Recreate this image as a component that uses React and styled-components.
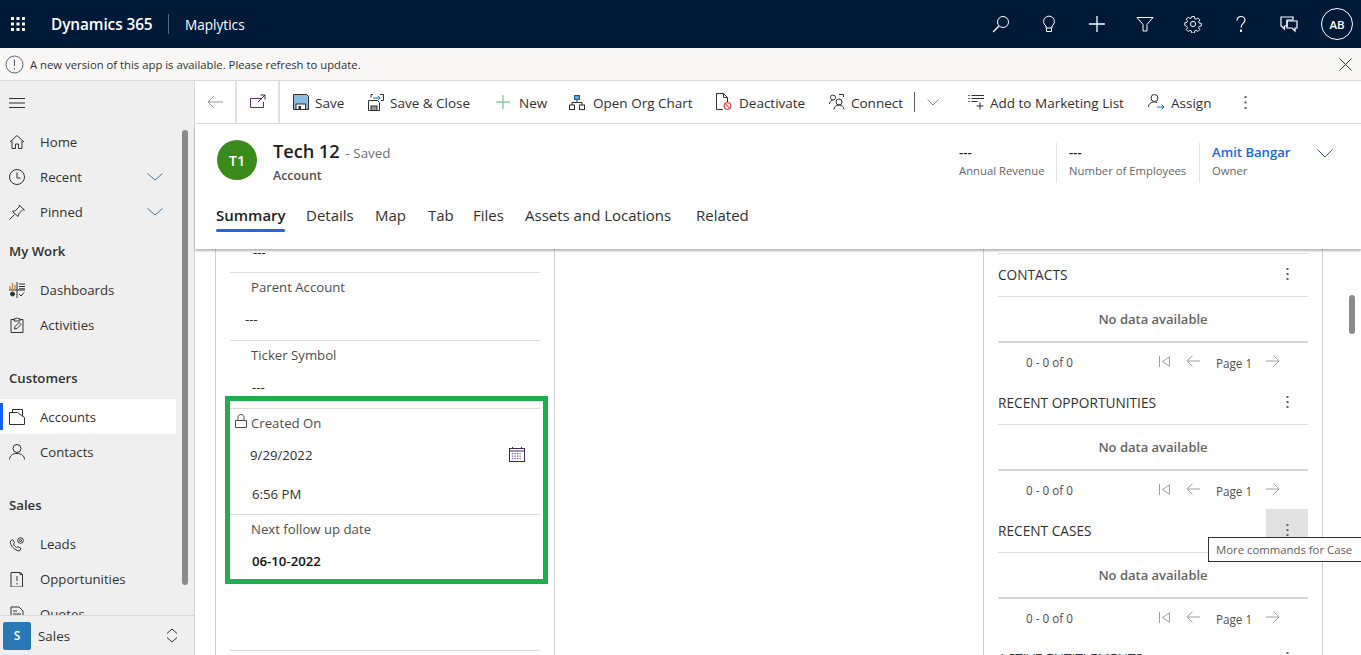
import React from "react";
import styled, { createGlobalStyle } from "styled-components";

const Global = createGlobalStyle`
  html, body { margin: 0; padding: 0; height: 100%; overflow: hidden; background: #fff; }
  body { font-family: "Open Sans", "Noto Sans", "Liberation Sans", sans-serif; color: #323130; }
  * { box-sizing: border-box; }
`;

const Page = styled.div`
  width: 1361px; height: 655px; display: flex; flex-direction: column; overflow: hidden; position: relative;
`;

/* Top bar */
const TopBar = styled.header`
  height: 48px; flex: none; background: #001a38; color: #fff; display: flex; align-items: center;
`;
const Waffle = styled.div`width: 36px; margin-right: 15px; display: flex; justify-content: center; align-items: center;`;
const Brand = styled.div`font-size: 15.4px; font-weight: 600; letter-spacing: -0.1px; width: 101px; white-space: nowrap;`;
const BrandSep = styled.div`width: 1px; height: 20px; background: #5d6b7e; margin: 0 16px 0 16px;`;
const AppName = styled.div`font-size: 13.6px; font-weight: 500; white-space: nowrap;`;
const TopIcons = styled.div`margin-left: auto; display: flex; align-items: center; padding-right: 0;`;
const TopBtn = styled.div`width: 48px; height: 48px; display: flex; align-items: center; justify-content: center;`;
const Avatar = styled.div`
  width: 32px; height: 32px; border: 1px solid #fff; border-radius: 50%; display: flex; align-items: center; justify-content: center;
  font-size: 11.5px; font-weight: 600; color: #fff;
`;

/* Notice */
const Notice = styled.div`
  height: 33px; flex: none; background: #f8f7f5; border-bottom: 1px solid #d9d9d9; display: flex; align-items: center;
  padding: 0 9px 0 5px; font-size: 11.3px; color: #323130;
`;
const NoticeText = styled.span`margin-left: 6px; white-space: nowrap;`;
const NoticeClose = styled.div`margin-left: auto; display: flex;`;

/* Main */
const Main = styled.div`flex: 1; display: flex; min-height: 0;`;
const Sidebar = styled.aside`
  width: 195px; flex: none; background: #efefef; border-right: 1px solid #d9d9d9; display: flex; flex-direction: column; position: relative;
`;
const Burger = styled.div`height: 43px; flex: none; padding: 0 0 0 9px; display: flex; align-items: center;`;
const Nav = styled.nav`flex: 1; min-height: 0; overflow: hidden;`;
const NavItem = styled.div`
  height: 35px; width: 176px; display: flex; align-items: center; position: relative; font-size: 13.2px; color: #323130;
  background: ${p => (p.$active ? "#fff" : "transparent")};
  ${p => p.$active && `&::before { content: ""; position: absolute; left: 0; top: 4px; bottom: 4px; width: 3px; background: #0f62fe; }`}
`;
const NavIcon = styled.span`width: 40px; flex: none; display: flex; justify-content: center; padding-right: 6px;`;
const NavLabel = styled.span`flex: 1; white-space: nowrap;`;
const NavChevron = styled.span`display: flex; margin-right: 13px;`;
const NavHead = styled.div`
  height: ${p => p.$h || 42}px; display: flex; align-items: center; padding-left: 9px; font-size: 13.2px; font-weight: 600; color: #323130;
  margin-top: ${p => p.$gap || 0}px;
`;
const SideFooter = styled.div`
  height: 40px; flex: none; border-top: 1px solid #d9d9d9; display: flex; align-items: center; padding-left: 3px; font-size: 13.4px; font-weight: 500;
  background: #efefef;
`;
const AreaBadge = styled.div`
  width: 28px; height: 28px; background: #2a77b6; color: #fff; border-radius: 2px; font-size: 12px; font-weight: 600;
  display: flex; align-items: center; justify-content: center; margin-right: 7px;
`;
const AreaSwitch = styled.span`margin-left: auto; margin-right: 16px; display: flex;`;
const SideScroll = styled.div`
  position: absolute; left: 182px; top: 49px; width: 6px; height: 455px; background: #8a8a8a; border-radius: 3px;
`;

/* Content */
const Content = styled.div`flex: 1; min-width: 0; display: flex; flex-direction: column;`;
const CommandBar = styled.div`
  height: 43px; flex: none; display: flex; align-items: center; border-bottom: 1px solid #d9d9d9; font-size: 13.5px; color: #323130;
`;
const CmdSquare = styled.div`
  height: 42px; display: flex; align-items: center; justify-content: center; border-right: 2px solid #e1e1e1; width: ${p => p.$w}px; flex: none;
`;
const Cmd = styled.div`
  display: flex; align-items: center; flex: none; width: ${p => p.$w}px; height: 42px; padding-top: 1px; padding-left: ${p => p.$pl || 0}px; white-space: nowrap;
`;
const CmdIcon = styled.span`width: ${p => p.$w || 23}px; flex: none; display: flex; justify-content: flex-start; margin-top: -1px;`;
const CmdSep = styled.div`width: 1px; height: 20px; background: #605e5c; flex: none;`;

const Header = styled.div`
  height: 125px; flex: none; background: #fff; position: relative; z-index: 2; box-shadow: 0 2px 2px rgba(0,0,0,.28);
  display: flex; flex-direction: column; padding: 0 0 0 21px;
`;
const HeaderTop = styled.div`display: flex; align-items: flex-start; height: 71px; padding-top: 16px;`;
const Circle = styled.div`
  width: 40px; height: 40px; border-radius: 50%; background: #3a8a1c; color: #fff; font-size: 14.5px; font-weight: 600;
  display: flex; align-items: center; justify-content: center; margin-right: 16px; margin-left: 1px;
`;
const TitleBlock = styled.div`display: flex; flex-direction: column;`;
const TitleRow = styled.div`display: flex; align-items: baseline; height: 27px; margin-top: -2px;`;
const Title = styled.div`font-size: 18.3px; font-weight: 600; color: #201f1e; white-space: nowrap; letter-spacing: -0.1px;`;
const Saved = styled.span`font-size: 13.4px; color: #707070; margin-left: 6px; white-space: nowrap;`;
const Entity = styled.div`font-size: 12.4px; font-weight: 600; color: #505050; margin-top: 2px;`;
const Stats = styled.div`margin-left: auto; display: flex; align-items: flex-start; padding-top: 3px;`;
const Stat = styled.div`
  width: ${p => p.$w}px; height: 40px; display: flex; flex-direction: column; padding-left: ${p => p.$pl}px;
  border-left: ${p => (p.$sep ? "1px solid #e1e1e1" : "none")};
`;
const StatValue = styled.div`font-size: 13.1px; font-weight: 600; color: ${p => p.$link ? "#2266e3" : "#201f1e"}; height: 20px; line-height: 18px; white-space: nowrap;`;
const StatLabel = styled.div`font-size: 11.3px; color: #666; line-height: 16px; white-space: nowrap;`;
const OwnerChevron = styled.div`width: 44px; padding-top: 6px; flex:none; display: flex; align-items: flex-start;`;
const Tabs = styled.div`display: flex; align-items: flex-start; height: 36px; font-size: 15px; color: #323130; margin-left: 0;`;
const Tab = styled.div`
  width: ${p => p.$w}px; flex: none; position: relative; height: 35px; line-height: 36px; margin-right: ${p => p.$mr}px; white-space: nowrap; margin-top: 2px;
  font-weight: ${p => (p.$active ? 600 : 400)}; color: ${p => (p.$active ? "#201f1e" : "#323130")};
  ${p => p.$active && `&::after { content: ""; position: absolute; left: 0; right: 0; bottom: 0; height: 3px; border-radius: 2px; background: #2266e3; }`}
`;

const Body = styled.div`flex: 1; min-height: 0; position: relative; background: #fff; overflow: hidden; display: flex; padding-left: 20px;`;
const Section = styled.section`
  width: ${p => p.$w || 340}px; flex: none; height: 100%; border-left: 1px solid #cfcfcf; border-right: 1px solid #cfcfcf; overflow: hidden;
  margin-right: ${p => p.$mr || 0}px;
`;
const FormInner = styled.div`padding: 0 14px;`;
const TopValue = styled.div`height: 23px; padding-left: 23px; font-size: 13.2px; line-height: 6px; color: #201f1e; overflow: hidden;`;
const Field = styled.div`height: ${p => p.$h}px; border-top: 1px solid #dcdcdc; display: flex; flex-direction: column;`;
const FieldLabel = styled.div`
  height: 28px; display: flex; align-items: center; padding-left: ${p => p.$lock ? 5 : 21}px; font-size: 13.2px; color: #4f4e4d; white-space: nowrap;
`;
const LockWrap = styled.span`display: flex; width: 16px; margin-top: -4px;`;
const FieldValue = styled.div`
  height: ${p => p.$h || 36}px; display: flex; align-items: center; justify-content: space-between; padding: 0 15px 0 ${p => p.$pl}px;
  font-size: 13.2px; font-weight: ${p => (p.$bold ? 600 : 400)}; color: ${p => (p.$bold ? "#111" : "#323130")}; white-space: nowrap;
`;
const Highlight = styled.div`
  position: absolute; left: 30px; top: 147px; width: 323px; height: 188px; border: 5px solid #22ae4e; pointer-events: none;
`;

const Panels = styled.div`padding: 4px 14px 0; width: 100%;`;
const TopLine = styled.div`height: 1px; background: #dcdcdc;`;
const Panel = styled.div`height: 128px; display: flex; flex-direction: column;`;
const PanelHead = styled.div`
  height: 43px; flex: none; border-bottom: 1px solid #dcdcdc; display: flex; align-items: center; justify-content: space-between;
  font-size: 13.7px; color: #323130; font-weight: 500; white-space: nowrap;
`;
const PanelTitle = styled.span`margin-top: -2px;`;
const MoreBtn = styled.div`
  width: 42px; height: 42px; display: flex; align-items: center; justify-content: center; background: ${p => p.$on ? "#e1e1e1" : "transparent"};
  margin-top: -2px;
`;
const NoData = styled.div`
  height: 46px; flex: none; border-bottom: 2px solid #d6d6d6; display: flex; align-items: center; justify-content: center;
  font-size: 13px; font-weight: 600; color: #666;
`;
const Pager = styled.div`height: 39px; flex: none; display: flex; align-items: center; font-size: 11.7px; color: #4f4e4d; padding-left: 28px;`;
const PagerCount = styled.span`width: 133px; flex: none; white-space: nowrap; margin-top: -1px;`;
const PagerIcon = styled.span`display: flex; width: ${p => p.$w}px; flex: none; margin-top: -3px;`;
const PagerPage = styled.span`width: 50px; flex: none; white-space: nowrap;`;

const Tooltip = styled.div`
  position: absolute; left: 1013px; top: 288px; width: 154px; height: 25px; background: #fff; border: 1px solid #333; color: #605e5c;
  font-size: 11.35px; display: flex; align-items: center; padding-left: 7px; white-space: nowrap; z-index: 3;
`;
const MainScroll = styled.div`position: absolute; left: 1154px; top: 46px; width: 6px; height: 39px; background: #8a8a8a; border-radius: 3px;`;

/* Icons */
const Svg = ({ s = 16, w, h, c = "#323130", sw = 1, vb, children }) => (
  <svg width={w || s} height={h || s} viewBox={vb || `0 0 ${w || s} ${h || s}`} fill="none" stroke={c} strokeWidth={sw} style={{ display: "block" }}>{children}</svg>
);

const WaffleIcon = () => (
  <svg width="16" height="16" viewBox="0 0 16 16" fill="#fff" style={{ display: "block" }}>
    {[1, 6.5, 12].flatMap(y => [1, 6.5, 12].map(x => <rect key={`${x}-${y}`} x={x} y={y} width="3" height="3" />))}
  </svg>
);
const Search = () => <Svg s={18} c="#fff"><circle cx="11" cy="7" r="5.5" /><path d="M7 11l-6 6" strokeWidth="1.4" /></Svg>;
const Bulb = () => <Svg s={18} c="#fff"><path d="M6 13v-2C4.5 9.8 3.6 8.400 3.600 6.500a5.400 5.400 0 0 1 10.800 0c0 1.900-.9 3.300-2.400 4.500v2zM6.500 13v3.500h5V13" /></Svg>;
const Plus = ({ s = 18, c = "#fff", sw = 1.3 }) => <Svg s={s} c={c} sw={sw}><path d={`M${s / 2} 1V${s - 1}M1 ${s / 2}H${s - 1}`} /></Svg>;
const Funnel = () => <Svg s={18} c="#fff"><path d="M1 2.500h16L11 9.500v6.500H7V9.500z" /></Svg>;
const Gear = () => (
  <Svg s={18} c="#fff">
    <circle cx="9" cy="9" r="2.600" />
    <path d="M7.600 1h2.800l.4 2.300 1.400.6 2-1.300 2 2-1.300 2 .6 1.400 2.300.4v2.800l-2.300.4-.6 1.400 1.300 2-2 2-2-1.300-1.400.6-.4 2.300H7.600l-.4-2.300-1.400-.6-2 1.300-2-2 1.300-2-.6-1.400L.2 10.400V7.600l2.300-.4.6-1.400-1.300-2 2-2 2 1.300 1.400-.6z" transform="scale(.94) translate(.6 .6)" />
  </Svg>
);
const Help = () => <Svg s={18} c="#fff" sw={1.2}><path d="M5 5.500C5 3 7 1.500 9 1.500s4 1.400 4 3.600c0 3.500-4 3.200-4 7.400" /><circle cx="9" cy="15.800" r=".6" fill="#fff" /></Svg>;
const Chat = () => (
  <Svg s={18} c="#fff" sw={1.2}>
    <path d="M1 2h12v3H7v6H4.500v3L1.500 11H1z" />
    <path d="M7 6h10v7h-2v3l-3-3H7z" />
  </Svg>
);
const InfoCircle = () => (
  <Svg s={19} c="#55606b"><circle cx="9.500" cy="9.500" r="8.500" /><path d="M9.500 4.500v6.500M9.500 13v1.500" /></Svg>
);
const CloseX = () => <Svg s={13} c="#323130"><path d="M.5.500l12 12M12.500.500l-12 12" /></Svg>;
const Hamburger = () => <Svg w={16} h={10}><path d="M0 .500h16M0 5h16M0 9.500h16" /></Svg>;
const Chevron = ({ w = 16, h = 8, c = "#4d6f87" }) => <Svg w={w} h={h} c={c}><path d={`M.5 .5L${w / 2} ${h - 1}L${w - .5} .5`} /></Svg>;

const Home = () => <Svg><path d="M1 8l7-6.500L15 8M3 6.500V14.500h3.500V10h3v4.500H13V6.500" /></Svg>;
const Clock = () => <Svg><circle cx="8" cy="8" r="7.500" /><path d="M8 3.500V9h3.500" /></Svg>;
const Pin = () => <Svg><path d="M.5 15.500L5.500 10.500M3.500 7.500l3-1 4-4-.5-1.500 5.500 5-1.500-.5-4 4-1 3z" /></Svg>;
const Dash = () => (
  <Svg>
    <path d="M0 8h16M8 0v16" />
    <path d="M1 7V4M3.500 7V1M6 7V3" stroke="#c98a3c" strokeWidth="1.400" />
    <path d="M10 2h6M10 4.500h6M10 6.800h6M10 12l2 2 3-3.500" />
    <circle cx="3.500" cy="12" r="2" fill="#323130" />
  </Svg>
);
const Clipboard = () => (
  <Svg><path d="M5 2.500H2v13h12v-13h-3M5 4V1.800h2l1-1 1 1h2V4zM5.500 12l.5-2.500 4-4 2 2-4 4z" /></Svg>
);
const Account = () => <Svg><path d="M.5 3.500h8l7 5v7H.5zM3.500 3.500V.5h10v7" /></Svg>;
const Person = ({ s = 16, c = "#323130" }) => <Svg s={s} c={c}><circle cx="8" cy="4.500" r="4" /><path d="M.5 15.500c0-3.500 3-6 7.500-6s7.500 2.500 7.500 6" /></Svg>;
const Phone = () => (
  <Svg>
    <path d="M1.500 5c-1 4 4.500 10 9 10l1.500-2.500-3-2-1.500 1c-1.500-.8-2.500-2-3-3.500l1-1.500-2-3z" />
    <circle cx="11.500" cy="4.500" r="2.800" /><circle cx="11.500" cy="4.500" r="1" />
  </Svg>
);
const Opp = () => <Svg><path d="M2 1.500h9v2h2.500v12.500H2zM11 1.500l2.500 2M8 5v5M8 12v1.500" /></Svg>;
const Quote = () => <Svg><path d="M2 1h8l4 4v10H2zM4 5h4M4 8h8M4 11h8" /></Svg>;
const UpDown = () => <Svg w={12} h={15} c="#323130"><path d="M1 5.500L6 1l5 4.500M1 9.500L6 14l5-4.500" /></Svg>;

const Back = () => <Svg s={16} c="#9a9896"><path d="M16 8H1M7 2L1 8l6 6" /></Svg>;
const Popout = () => <Svg s={16}><path d="M11 4.500H.5v9h13V8" stroke="#5c2e6f" /><path d="M8 8L15 1M10.500 1H15v4.500" stroke="#323130" /></Svg>;
const Floppy = () => (
  <svg width="16" height="16" viewBox="0 0 16 16" style={{ display: "block" }}>
    <path d="M.5.500h13l2 2v13H.5z" fill="#8dbbe3" stroke="#323130" />
    <rect x="3" y="10" width="9.500" height="5.500" fill="#fff" stroke="#323130" />
    <rect x="5.500" y="12" width="2.500" height="3.500" fill="#323130" />
  </svg>
);
const SaveClose = () => (
  <svg width="16" height="17" viewBox="0 0 16 17" fill="none" style={{ display: "block" }}>
    <path d="M.5 6.500h9l2 2v8H.5z" stroke="#323130" />
    <rect x="3" y="12" width="6" height="4.500" stroke="#323130" fill="#9a9a9a" />
    <path d="M3 3.500V.5h2M12 .5h3.500v6H13" stroke="#323130" />
    <path d="M5 4h7M10 1.800l2 2.200-2 2.200" stroke="#106ebe" />
  </svg>
);
const OrgChart = () => (
  <svg width="16" height="15" viewBox="0 0 16 15" fill="none" style={{ display: "block" }}>
    <rect x="5.500" y=".5" width="5" height="4" fill="#5da5e0" stroke="#1d5d96" />
    <path d="M8 4.500v3M3 10V7.500h10V10" stroke="#323130" />
    <rect x=".5" y="10" width="5" height="4.500" stroke="#323130" />
    <rect x="10.500" y="10" width="5" height="4.500" stroke="#323130" />
  </svg>
);
const Deact = () => (
  <svg width="16" height="18" viewBox="0 0 16 18" fill="none" style={{ display: "block" }}>
    <path d="M7 16.500H.5V.5h7l4 4V9M7.500.5v4h4" stroke="#323130" />
    <circle cx="11.500" cy="13" r="3.300" stroke="#e0505a" strokeWidth="1.300" />
    <path d="M9.200 10.700l4.600 4.600" stroke="#e0505a" strokeWidth="1.200" />
  </svg>
);
const Connect = () => (
  <Svg s={16}>
    <circle cx="4" cy="3.500" r="2.500" />
    <path d="M.5 10c0-2 1-3.500 3-3.500M10 .5h4.500V3" />
    <circle cx="10" cy="8" r="3" />
    <path d="M5 15.500c0-2.500 2-4.500 5-4.500s5 2 5 4.500" />
  </Svg>
);
const AddList = () => (
  <svg width="17" height="16" viewBox="0 0 17 16" fill="none" style={{ display: "block" }}>
    <path d="M3.500 1.500H16M3.500 4.500H16M3.500 7.500h6" stroke="#323130" />
    <path d="M0 1.500h2M0 4.500h2M0 7.500h2" stroke="#323130" opacity=".7" />
    <path d="M12 8.500v7M8.500 12h7" stroke="#323130" />
  </svg>
);
const Assign = () => (
  <svg width="17" height="16" viewBox="0 0 17 16" fill="none" style={{ display: "block" }}>
    <circle cx="6.500" cy="4" r="3.500" stroke="#323130" />
    <path d="M.5 13c0-3 2.500-5 6-5 1 0 2 .2 2.800.6" stroke="#323130" />
    <path d="M9 13h7M13.500 10.500L16 13l-2.500 2.500" stroke="#106ebe" />
  </svg>
);
const Dots = ({ c = "#605e5c", h = 13 }) => (
  <svg width="3" height={h} viewBox={`0 0 3 ${h}`} fill={c} style={{ display: "block" }}>
    <rect x=".5" y="0" width="2" height="2" /><rect x=".5" y={(h - 2) / 2} width="2" height="2" /><rect x=".5" y={h - 2} width="2" height="2" />
  </svg>
);
const Lock = () => <Svg w={12} h={14} c="#4f4e4d"><path d="M.5 6.500h11v7H.5zM3 6.500V3.500C3 1.500 4.500.5 6 .5s3 1 3 3v3" /></Svg>;
const Calendar = () => (
  <svg width="16" height="15" viewBox="0 0 16 15" fill="none" style={{ display: "block" }}>
    <rect x=".5" y="1.500" width="15" height="13" stroke="#3f2a5c" />
    <path d="M.5 4h15" stroke="#3f2a5c" strokeWidth="1" />
    <path d="M3.500 0v2M12.500 0v2" stroke="#3f2a5c" />
    {[6, 8.500, 11].flatMap(y => [3, 5.500, 8, 10.500].map(x => <rect key={`${x}${y}`} x={x} y={y} width="1.200" height="1.200" fill="#7a4aa0" />))}
  </svg>
);
const PgFirst = () => <Svg w={11} h={11} c="#a19f9d"><path d="M.5 0v11M10.500 .8L3.500 5.500l7 4.700z" /></Svg>;
const PgPrev = () => <Svg w={14} h={12} c="#a19f9d"><path d="M14 6H1M6.500.5L1 6l5.500 5.500" /></Svg>;
const PgNext = () => <Svg w={14} h={12} c="#a19f9d"><path d="M0 6h13M7.500.5L13 6l-5.500 5.500" /></Svg>;

const navA = [
  { l: "Home", i: <Home /> },
  { l: "Recent", i: <Clock />, c: 1 },
  { l: "Pinned", i: <Pin />, c: 1 },
];

const NavEntry = ({ icon, label, chevron, active }) => (
  <NavItem $active={active}>
    <NavIcon>{icon}</NavIcon>
    <NavLabel>{label}</NavLabel>
    {chevron && <NavChevron><Chevron /></NavChevron>}
  </NavItem>
);

const panels = [
  { t: "CONTACTS" },
  { t: "RECENT OPPORTUNITIES" },
  { t: "RECENT CASES", on: true },
  { t: "ACTIVE ENTITLEMENTS" },
];

const DataPanel = ({ t, on }) => (
  <Panel>
    <PanelHead>
      <PanelTitle>{t}</PanelTitle>
      <MoreBtn $on={on}><Dots c="#605e5c" h={12} /></MoreBtn>
    </PanelHead>
    <NoData>No data available</NoData>
    <Pager>
      <PagerCount>0 - 0 of 0</PagerCount>
      <PagerIcon $w={27}><PgFirst /></PagerIcon>
      <PagerIcon $w={30}><PgPrev /></PagerIcon>
      <PagerPage>Page 1</PagerPage>
      <PagerIcon $w={14}><PgNext /></PagerIcon>
    </Pager>
  </Panel>
);

export default function App() {
  return (
    <Page>
      <Global />
      <TopBar>
        <Waffle><WaffleIcon /></Waffle>
        <Brand>Dynamics 365</Brand>
        <BrandSep />
        <AppName>Maplytics</AppName>
        <TopIcons>
          <TopBtn><Search /></TopBtn>
          <TopBtn><Bulb /></TopBtn>
          <TopBtn><Plus /></TopBtn>
          <TopBtn><Funnel /></TopBtn>
          <TopBtn><Gear /></TopBtn>
          <TopBtn><Help /></TopBtn>
          <TopBtn><Chat /></TopBtn>
          <TopBtn><Avatar>AB</Avatar></TopBtn>
        </TopIcons>
      </TopBar>
      <Notice>
        <InfoCircle />
        <NoticeText>A new version of this app is available. Please refresh to update.</NoticeText>
        <NoticeClose><CloseX /></NoticeClose>
      </Notice>
      <Main>
        <Sidebar>
          <Burger><Hamburger /></Burger>
          <Nav>
            {navA.map(n => <NavEntry key={n.l} icon={n.i} label={n.l} chevron={n.c} />)}
            <NavHead $h={43}>My Work</NavHead>
            <NavEntry icon={<Dash />} label="Dashboards" />
            <NavEntry icon={<Clipboard />} label="Activities" />
            <NavHead $gap={15}>Customers</NavHead>
            <NavEntry icon={<Account />} label="Accounts" active />
            <NavEntry icon={<Person />} label="Contacts" />
            <NavHead $gap={15}>Sales</NavHead>
            <NavEntry icon={<Phone />} label="Leads" />
            <NavEntry icon={<Opp />} label="Opportunities" />
            <NavEntry icon={<Quote />} label="Quotes" />
          </Nav>
          <SideFooter>
            <AreaBadge>S</AreaBadge>
            Sales
            <AreaSwitch><UpDown /></AreaSwitch>
          </SideFooter>
          <SideScroll />
        </Sidebar>
        <Content>
          <CommandBar>
            <CmdSquare $w={42}><Back /></CmdSquare>
            <CmdSquare $w={43}><Popout /></CmdSquare>
            <Cmd $w={75} $pl={13}><CmdIcon $w={22}><Floppy /></CmdIcon>Save</Cmd>
            <Cmd $w={127} $pl={13}><CmdIcon $w={22}><SaveClose /></CmdIcon>Save &amp; Close</Cmd>
            <Cmd $w={73} $pl={13}><CmdIcon $w={24}><Plus s={16} c="#84cf9f" sw={1.4} /></CmdIcon>New</Cmd>
            <Cmd $w={146} $pl={14}><CmdIcon $w={24}><OrgChart /></CmdIcon>Open Org Chart</Cmd>
            <Cmd $w={112} $pl={15}><CmdIcon><Deact /></CmdIcon>Deactivate</Cmd>
            <Cmd $w={101} $pl={16}><CmdIcon $w={22}><Connect /></CmdIcon>Connect</Cmd>
            <CmdSep />
            <Cmd $w={50} $pl={12}><Chevron w={12} h={7} c="#8a8886" /></Cmd>
            <Cmd $w={183} $pl={3}><CmdIcon $w={22}><AddList /></CmdIcon>Add to Marketing List</Cmd>
            <Cmd $w={96} $pl={0}><CmdIcon><Assign /></CmdIcon>Assign</Cmd>
            <Dots c="#605e5c" h={13} />
          </CommandBar>
          <Header>
            <HeaderTop>
              <Circle>T1</Circle>
              <TitleBlock>
                <TitleRow><Title>Tech 12</Title><Saved>- Saved</Saved></TitleRow>
                <Entity>Account</Entity>
              </TitleBlock>
              <Stats>
                <Stat $w={97} $pl={0}><StatValue>---</StatValue><StatLabel>Annual Revenue</StatLabel></Stat>
                <Stat $w={143} $pl={12} $sep><StatValue>---</StatValue><StatLabel>Number of Employees</StatLabel></Stat>
                <Stat $w={118} $pl={12} $sep><StatValue $link>Amit Bangar</StatValue><StatLabel>Owner</StatLabel></Stat>
                <OwnerChevron><Chevron w={16} h={9} c="#2f5f9a" /></OwnerChevron>
              </Stats>
            </HeaderTop>
            <Tabs>
              <Tab $w={69} $mr={21} $active>Summary</Tab>
              <Tab $w={47} $mr={22}>Details</Tab>
              <Tab $w={32} $mr={21}>Map</Tab>
              <Tab $w={24} $mr={21}>Tab</Tab>
              <Tab $w={31} $mr={21}>Files</Tab>
              <Tab $w={147} $mr={24}>Assets and Locations</Tab>
              <Tab $w={52} $mr={0}>Related</Tab>
            </Tabs>
          </Header>
          <Body>
            <Section $mr={88 + 340}>
              <FormInner>
                <TopValue>---</TopValue>
                <Field $h={68}>
                  <FieldLabel>Parent Account</FieldLabel>
                  <FieldValue $pl={15}>---</FieldValue>
                </Field>
                <Field $h={68}>
                  <FieldLabel>Ticker Symbol</FieldLabel>
                  <FieldValue $pl={22}>---</FieldValue>
                </Field>
                <Field $h={106}>
                  <FieldLabel $lock><LockWrap><Lock /></LockWrap>Created On</FieldLabel>
                  <FieldValue $pl={20} $h={38}>9/29/2022<Calendar /></FieldValue>
                  <FieldValue $pl={22} $h={42}>6:56 PM</FieldValue>
                </Field>
                <Field $h={136}>
                  <FieldLabel>Next follow up date</FieldLabel>
                  <FieldValue $pl={22} $bold>06-10-2022</FieldValue>
                </Field>
                <Field $h={20} />
              </FormInner>
            </Section>
            <Section>
              <Panels>
                <TopLine />
                {panels.map(p => <DataPanel key={p.t} t={p.t} on={p.on} />)}
              </Panels>
            </Section>
            <Highlight />
            <MainScroll />
            <Tooltip>More commands for Case</Tooltip>
          </Body>
        </Content>
      </Main>
    </Page>
  );
}
